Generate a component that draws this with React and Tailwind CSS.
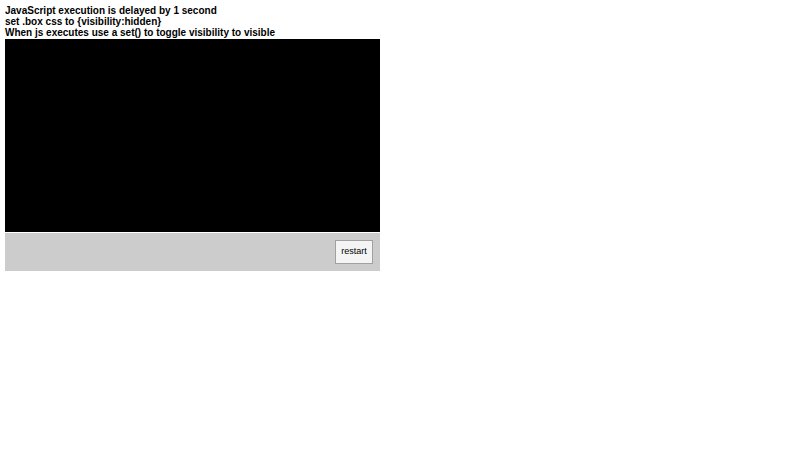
export default function App() {
  return (
    <div className="p-[5px] font-['Liberation_Sans',Arial,sans-serif]">
      <div className="text-[10px] leading-[11px] font-bold text-black">
        <div>JavaScript execution is delayed by 1 second</div>
        <div>set .box css to {'{visibility:hidden}'}</div>
        <div>When js executes use a set() to toggle visibility to visible</div>
      </div>
      <div className="w-[375px] mt-px">
        <div className="h-[193px] bg-black" />
        <div className="mt-px h-[38px] bg-[#cccccc] flex items-center justify-end pr-[7px]">
          <button className="h-[24px] w-[38px] text-[9px] bg-[#f4f4f4] border border-[#a0a0a0] text-black">
            restart
          </button>
        </div>
      </div>
    </div>
  );
}
